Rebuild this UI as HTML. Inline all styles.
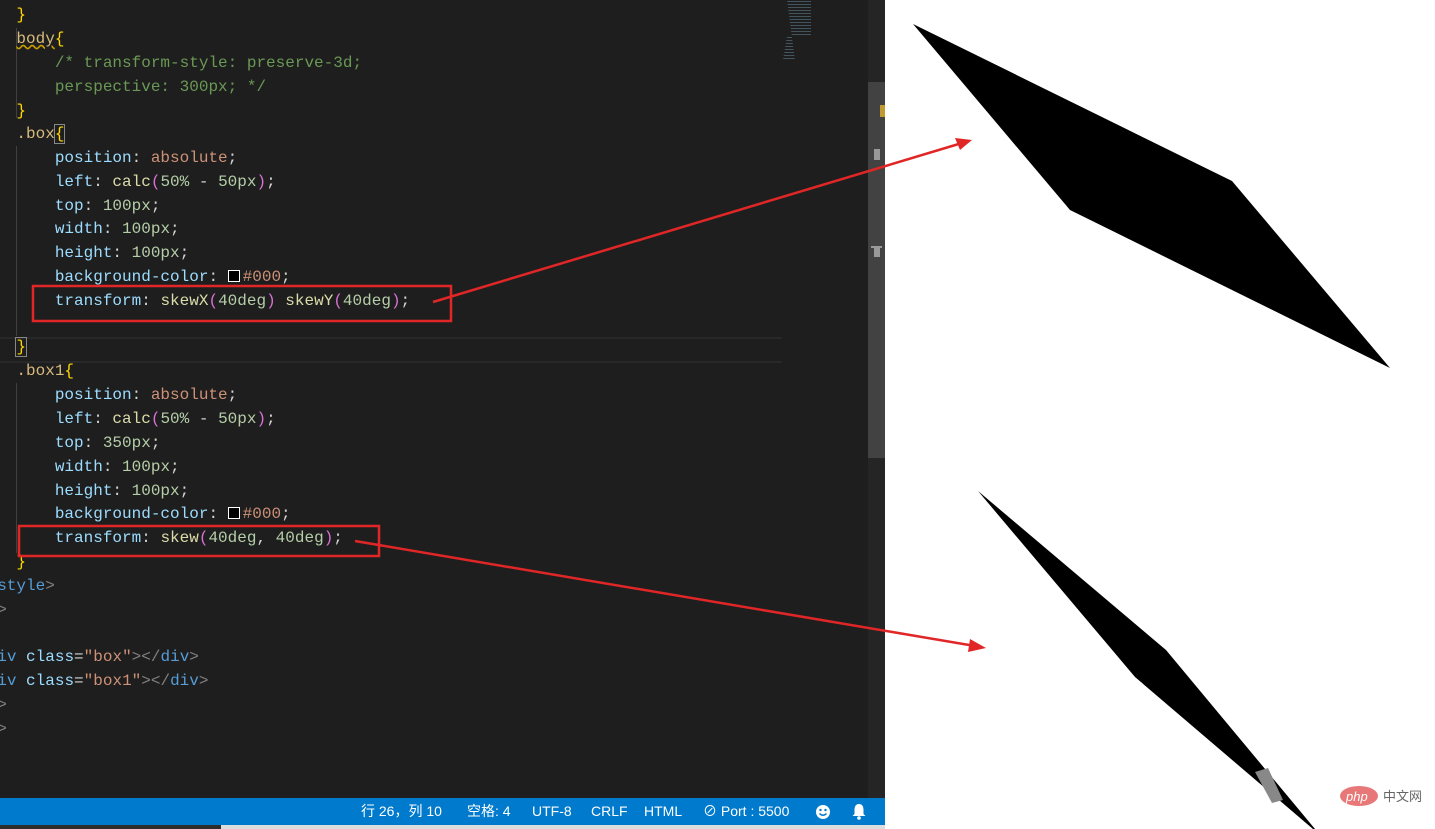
<!DOCTYPE html>
<html><head><meta charset="utf-8"><style>
body{margin:0;width:1435px;height:829px;overflow:hidden;background:#fff;position:relative;font-family:"Liberation Mono",monospace}
#ed{position:absolute;left:0;top:0;width:885px;height:798px;background:#1e1e1e;overflow:hidden}
.l{position:absolute;left:-22px;height:24px;line-height:24px;font-size:16px;white-space:pre;color:#d4d4d4}
.y{color:#ffd700}.s{color:#d7ba7d}.p{color:#9cdcfe}.v{color:#ce9178}.f{color:#dcdcaa}.n{color:#b5cea8}.c{color:#6a9955}.m{color:#da70d6}.t{color:#569cd6}.g{color:#808080}
.sw{display:inline-block;width:10px;height:10px;border:1.5px solid #fff;background:#000;margin-right:3px;vertical-align:-1px}
#sb{position:absolute;left:0;top:798px;width:885px;height:27px;background:#007acc;color:#fff;font-family:"Liberation Sans","Noto Sans CJK SC",sans-serif;font-size:14px;line-height:27px}
#sb span{position:absolute;top:0}
</style></head><body>
<div id="ed">
<div style="position:absolute;left:0;top:337px;width:782px;height:22px;border-top:2px solid #282828;border-bottom:2px solid #282828"></div>
<div style="position:absolute;left:16px;top:28px;width:1px;height:90px;background:#404040"></div>
<div style="position:absolute;left:16px;top:146px;width:1px;height:190px;background:#404040"></div>
<div style="position:absolute;left:16px;top:383px;width:1px;height:170px;background:#404040"></div>
<div class="l" style="top:3px">    <span class="y">}</span></div>
<div class="l" style="top:27px">    <span class="s" style="text-decoration:underline wavy #c8a000">body</span><span class="y">{</span></div>
<div class="l" style="top:51px"><span class="c">        /* transform-style: preserve-3d;</span></div>
<div class="l" style="top:75px"><span class="c">        perspective: 300px; */</span></div>
<div class="l" style="top:99px">    <span class="y">}</span></div>
<div class="l" style="top:122px">    <span class="s">.box</span><span class="y" style="outline:1px solid #888">{</span></div>
<div class="l" style="top:146px">        <span class="p">position</span>: <span class="v">absolute</span>;</div>
<div class="l" style="top:170px">        <span class="p">left</span>: <span class="f">calc</span><span class="m">(</span><span class="n">50%</span> - <span class="n">50px</span><span class="m">)</span>;</div>
<div class="l" style="top:194px">        <span class="p">top</span>: <span class="n">100px</span>;</div>
<div class="l" style="top:217px">        <span class="p">width</span>: <span class="n">100px</span>;</div>
<div class="l" style="top:241px">        <span class="p">height</span>: <span class="n">100px</span>;</div>
<div class="l" style="top:265px">        <span class="p">background-color</span>: <span class="sw"></span><span class="v">#000</span>;</div>
<div class="l" style="top:289px">        <span class="p">transform</span>: <span class="f">skewX</span><span class="m">(</span><span class="n">40deg</span><span class="m">)</span> <span class="f">skewY</span><span class="m">(</span><span class="n">40deg</span><span class="m">)</span>;</div>
<div class="l" style="top:335px">    <span class="y" style="outline:1px solid #888">}</span></div>
<div class="l" style="top:359px">    <span class="s">.box1</span><span class="y">{</span></div>
<div class="l" style="top:383px">        <span class="p">position</span>: <span class="v">absolute</span>;</div>
<div class="l" style="top:407px">        <span class="p">left</span>: <span class="f">calc</span><span class="m">(</span><span class="n">50%</span> - <span class="n">50px</span><span class="m">)</span>;</div>
<div class="l" style="top:431px">        <span class="p">top</span>: <span class="n">350px</span>;</div>
<div class="l" style="top:455px">        <span class="p">width</span>: <span class="n">100px</span>;</div>
<div class="l" style="top:479px">        <span class="p">height</span>: <span class="n">100px</span>;</div>
<div class="l" style="top:502px">        <span class="p">background-color</span>: <span class="sw"></span><span class="v">#000</span>;</div>
<div class="l" style="top:526px">        <span class="p">transform</span>: <span class="f">skew</span><span class="m">(</span><span class="n">40deg</span>, <span class="n">40deg</span><span class="m">)</span>;</div>
<div class="l" style="top:550px">    <span class="y">}</span></div>
<div class="l" style="top:574px"><span class="g">&lt;/</span><span class="t">style</span><span class="g">&gt;</span></div>
<div class="l" style="top:598px"><span class="g">&lt;/&gt;</span></div>
<div class="l" style="top:645px"><span class="g">&lt;</span><span class="t">div</span> <span class="p">class</span>=<span class="v">"box"</span><span class="g">&gt;&lt;/</span><span class="t">div</span><span class="g">&gt;</span></div>
<div class="l" style="top:669px"><span class="g">&lt;</span><span class="t">div</span> <span class="p">class</span>=<span class="v">"box1"</span><span class="g">&gt;&lt;/</span><span class="t">div</span><span class="g">&gt;</span></div>
<div class="l" style="top:693px"><span class="g">&lt;/&gt;</span></div>
<div class="l" style="top:717px"><span class="g">&lt;/&gt;</span></div>
<div style="position:absolute;left:783px;top:0;width:40px;height:60px;opacity:.5;background:repeating-linear-gradient(#1e1e1e 0 1px,#6a8aa0 1px 2px,#1e1e1e 2px 3px);clip-path:polygon(10% 0,70% 0,70% 60%,10% 60%,0 100%,30% 100%)"></div>
<div style="position:absolute;left:868px;top:0;width:17px;height:798px;background:#252525"></div>
<div style="position:absolute;left:868px;top:82px;width:17px;height:376px;background:#424242"></div>
<div style="position:absolute;left:880px;top:105px;width:5px;height:12px;background:#c09a30"></div>
<div style="position:absolute;left:874px;top:149px;width:6px;height:11px;background:#999"></div>
<div style="position:absolute;left:871px;top:246px;width:11px;height:2px;background:#999"></div>
<div style="position:absolute;left:874px;top:246px;width:6px;height:11px;background:#999"></div>
</div>
<div id="sb">
<span style="left:361px">行 26，列 10</span>
<span style="left:467px">空格: 4</span>
<span style="left:532px">UTF-8</span>
<span style="left:591px">CRLF</span>
<span style="left:644px">HTML</span>
<span style="left:703px">⊘ Port : 5500</span>
<svg style="position:absolute;left:815px;top:6px" width="16" height="16"><circle cx="8" cy="8" r="7" fill="#fff"/><circle cx="5.5" cy="6" r="1.2" fill="#007acc"/><circle cx="10.5" cy="6" r="1.2" fill="#007acc"/><path d="M4.5 9.5 Q8 13 11.5 9.5" stroke="#007acc" stroke-width="1.4" fill="none"/></svg>
<svg style="position:absolute;left:851px;top:5px" width="16" height="17"><path d="M8 1 C4.5 1 3.5 4 3.5 7 L3.5 11 L1.5 13 L14.5 13 L12.5 11 L12.5 7 C12.5 4 11.5 1 8 1 Z" fill="#fff"/><circle cx="8" cy="15" r="1.8" fill="#fff"/></svg>
</div>
<div style="position:absolute;left:0;top:825px;width:221px;height:4px;background:#2d2d2d"></div>
<div style="position:absolute;left:221px;top:825px;width:664px;height:4px;background:#ddd"></div>
<svg style="position:absolute;left:0;top:0" width="1435" height="829">
<polygon points="913,24 1232,181 1390,368 1070,210" fill="#000"/>
<polygon points="978,491 1166,650 1320,835 1135,677" fill="#000"/>
<polygon points="1255,772 1268,768 1283,800 1272,803" fill="#888"/>
<g stroke="#e02626" stroke-width="2.5" fill="none">
<rect x="33" y="286" width="418" height="35"/>
<rect x="19" y="526" width="360" height="30"/>
<line x1="433" y1="302" x2="962" y2="143"/>
<line x1="355" y1="541" x2="975" y2="646"/>
</g>
<polygon points="972,140 955,138 960,150" fill="#e02626"/>
<polygon points="986,648 970,639 968,652" fill="#e02626"/>
<ellipse cx="1359" cy="796" rx="19" ry="10" fill="#e87878"/>
<text x="1346" y="801" font-family="Liberation Sans,sans-serif" font-size="13" font-style="italic" fill="#fff">php</text>
<text x="1383" y="801" font-family="Noto Sans CJK SC,sans-serif" font-size="13" fill="#666">中文网</text>
</svg>
</body></html>
